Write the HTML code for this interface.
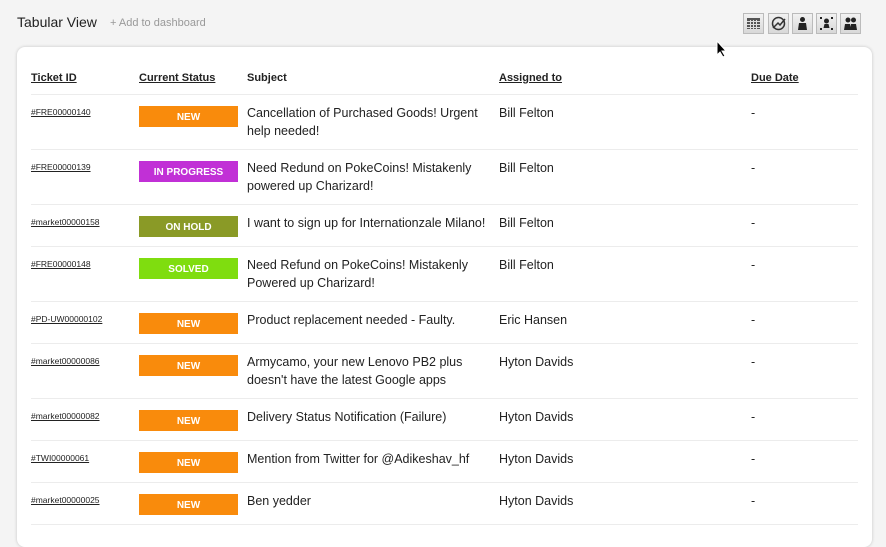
<!DOCTYPE html>
<html><head><style>
body{margin:0;width:886px;height:534px;background:#f4f4f4;font-family:"Liberation Sans",Arial,sans-serif;position:relative;overflow:hidden;color:#222}
.t{position:absolute;left:17px;top:14px;font-size:14px;color:#222}
.a{position:absolute;left:110px;top:17px;font-size:11px;color:#999}
.ic{position:absolute;top:13px;width:19px;height:19px;background:linear-gradient(#f2f2f2,#d8d8d8);border:1px solid #bbb;box-sizing:content-box}
.ic svg{display:block}
.card{position:absolute;left:17px;top:47px;width:855px;height:500px;background:#fff;border-radius:8px;box-shadow:0 0 3px rgba(0,0,0,.2)}
.h{position:absolute;top:72px;font-size:11px;font-weight:bold;color:#222}
.u{text-decoration:underline}
.sep{position:absolute;left:31px;width:827px;height:1px;background:#ececec}
.id{position:absolute;left:31px;font-size:8.5px;text-decoration:underline;color:#222;margin-top:1px}
.b{position:absolute;left:139px;width:99px;height:21px;line-height:23px;text-align:center;color:#fff;font-size:10px;font-weight:bold}
.s{position:absolute;left:247px;font-size:12.5px;line-height:18px;color:#222}
.n{position:absolute;left:499px;font-size:12.5px;line-height:18px}
.d{position:absolute;left:751px;font-size:12.5px;line-height:18px}
</style></head><body>
<div class="t">Tabular View</div><div class="a">+ Add to dashboard</div>
<div class="ic" style="left:743px"><svg width="19" height="19"><rect x="3" y="4" width="13" height="11" fill="#555"/><g stroke="#ddd" stroke-width="1"><line x1="3" y1="7.5" x2="16" y2="7.5"/><line x1="3" y1="10.5" x2="16" y2="10.5"/><line x1="3" y1="13.5" x2="16" y2="13.5"/><line x1="6.5" y1="6" x2="6.5" y2="15"/><line x1="9.5" y1="6" x2="9.5" y2="15"/><line x1="12.5" y1="6" x2="12.5" y2="15"/></g></svg></div>
<div class="ic" style="left:768px"><svg width="19" height="19"><circle cx="9.5" cy="9.5" r="6" fill="none" stroke="#333" stroke-width="1.5"/><path d="M4 14L9 9 11 11 16 5" stroke="#333" stroke-width="1.5" fill="none"/></svg></div>
<div class="ic" style="left:792px"><svg width="19" height="19"><circle cx="9.5" cy="5.5" r="2.5" fill="#222"/><path d="M5 16L6 9h7l1 7z" fill="#222"/></svg></div>
<div class="ic" style="left:816px"><svg width="19" height="19"><circle cx="9.5" cy="7" r="2.5" fill="#222"/><path d="M6.5 14l1-4h4l1 4z" fill="#222"/><g fill="#222"><rect x="3" y="3" width="2" height="2"/><rect x="14" y="3" width="2" height="2"/><rect x="3" y="14" width="2" height="2"/><rect x="14" y="14" width="2" height="2"/></g></svg></div>
<div class="ic" style="left:840px"><svg width="19" height="19"><circle cx="7" cy="6" r="2.5" fill="#222"/><circle cx="12.5" cy="6" r="2.5" fill="#222"/><path d="M3 16l1-6h5l1 6zM9 16l1-6h5l1 6z" fill="#222"/></svg></div>
<div class="card"></div>
<div class="h u" style="left:31px">Ticket ID</div>
<div class="h u" style="left:139px">Current Status</div>
<div class="h" style="left:247px">Subject</div>
<div class="h u" style="left:499px">Assigned to</div>
<div class="h u" style="left:751px">Due Date</div>

<div class="sep" style="top:94px"></div>
<div class="id" style="top:106px">#FRE00000140</div><div class="b" style="top:106px;background:#f98b0c">NEW</div>
<div class="s" style="top:104px">Cancellation of Purchased Goods! Urgent<br>help needed!</div><div class="n" style="top:104px">Bill Felton</div><div class="d" style="top:104px">-</div>

<div class="sep" style="top:149px"></div>
<div class="id" style="top:161px">#FRE00000139</div><div class="b" style="top:161px;background:#c130d6">IN PROGRESS</div>
<div class="s" style="top:159px">Need Redund on PokeCoins! Mistakenly<br>powered up Charizard!</div><div class="n" style="top:159px">Bill Felton</div><div class="d" style="top:159px">-</div>

<div class="sep" style="top:204px"></div>
<div class="id" style="top:216px">#market00000158</div><div class="b" style="top:216px;background:#8a9a26">ON HOLD</div>
<div class="s" style="top:214px">I want to sign up for Internationzale Milano!</div><div class="n" style="top:214px">Bill Felton</div><div class="d" style="top:214px">-</div>

<div class="sep" style="top:246px"></div>
<div class="id" style="top:258px">#FRE00000148</div><div class="b" style="top:258px;background:#7fdd0f">SOLVED</div>
<div class="s" style="top:256px">Need Refund on PokeCoins! Mistakenly<br>Powered up Charizard!</div><div class="n" style="top:256px">Bill Felton</div><div class="d" style="top:256px">-</div>

<div class="sep" style="top:301px"></div>
<div class="id" style="top:313px">#PD-UW00000102</div><div class="b" style="top:313px;background:#f98b0c">NEW</div>
<div class="s" style="top:311px">Product replacement needed - Faulty.</div><div class="n" style="top:311px">Eric Hansen</div><div class="d" style="top:311px">-</div>

<div class="sep" style="top:343px"></div>
<div class="id" style="top:355px">#market00000086</div><div class="b" style="top:355px;background:#f98b0c">NEW</div>
<div class="s" style="top:353px">Armycamo, your new Lenovo PB2 plus<br>doesn't have the latest Google apps</div><div class="n" style="top:353px">Hyton Davids</div><div class="d" style="top:353px">-</div>

<div class="sep" style="top:398px"></div>
<div class="id" style="top:410px">#market00000082</div><div class="b" style="top:410px;background:#f98b0c">NEW</div>
<div class="s" style="top:408px">Delivery Status Notification (Failure)</div><div class="n" style="top:408px">Hyton Davids</div><div class="d" style="top:408px">-</div>

<div class="sep" style="top:440px"></div>
<div class="id" style="top:452px">#TWI00000061</div><div class="b" style="top:452px;background:#f98b0c">NEW</div>
<div class="s" style="top:450px">Mention from Twitter for @Adikeshav_hf</div><div class="n" style="top:450px">Hyton Davids</div><div class="d" style="top:450px">-</div>

<div class="sep" style="top:482px"></div>
<div class="id" style="top:494px">#market00000025</div><div class="b" style="top:494px;background:#f98b0c">NEW</div>
<div class="s" style="top:492px">Ben yedder</div><div class="n" style="top:492px">Hyton Davids</div><div class="d" style="top:492px">-</div>

<div class="sep" style="top:524px"></div>
<svg style="position:absolute;left:716px;top:40px" width="12" height="18"><path d="M1 1v14l3-3 3 5 2-1-3-5h4z" fill="#000" stroke="#fff" stroke-width="1"/></svg>
</body></html>
